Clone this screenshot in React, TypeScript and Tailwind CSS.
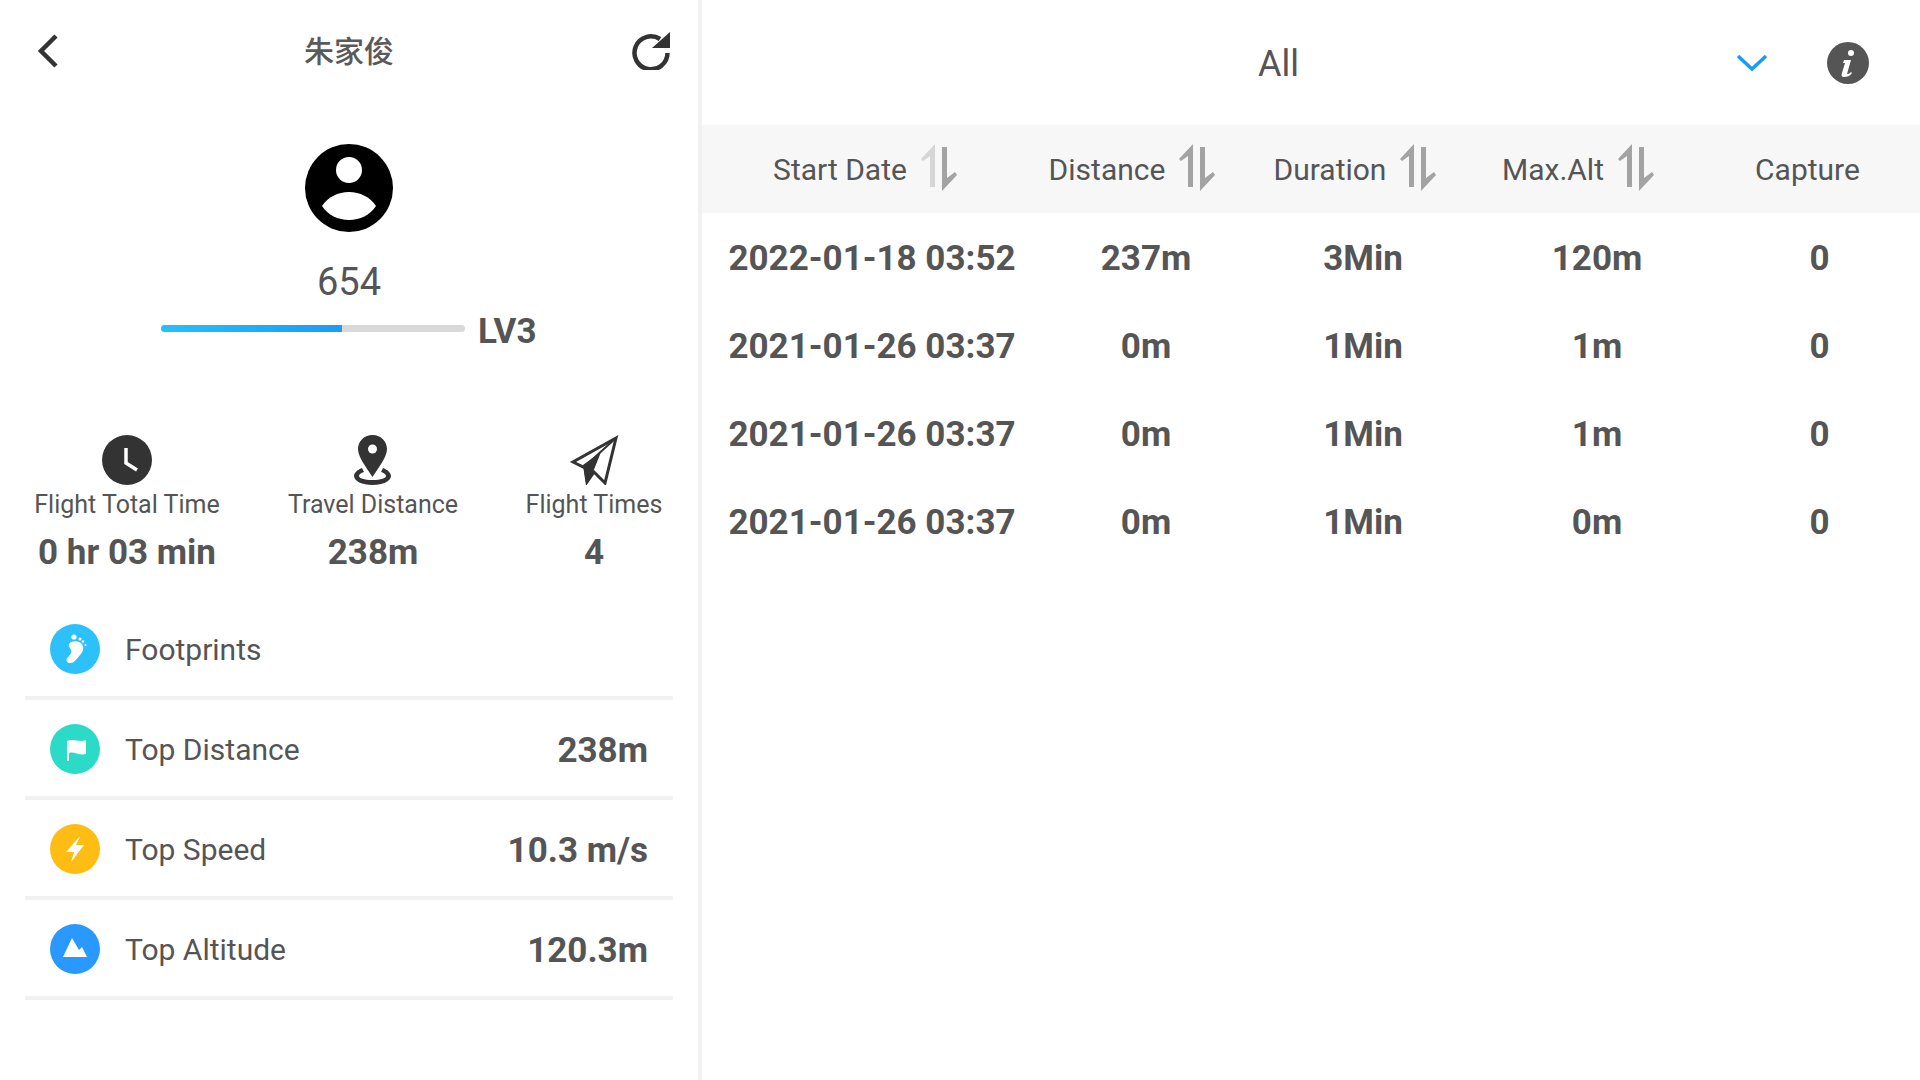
import React from "react";

const font = { fontFamily: 'Roboto, "Noto Sans CJK SC", sans-serif' };

const stats = [
  { label: "Flight Total Time", value: "0 hr 03 min", icon: "clock", width: "w-[254px]" },
  { label: "Travel Distance", value: "238m", icon: "pin", width: "w-[238px]" },
  { label: "Flight Times", value: "4", icon: "plane", width: "w-[204px]" },
];

const records = [
  { label: "Footprints", value: "", icon: "foot" },
  { label: "Top Distance", value: "238m", icon: "flag" },
  { label: "Top Speed", value: "10.3 m/s", icon: "bolt" },
  { label: "Top Altitude", value: "120.3m", icon: "peak" },
];

const flights = [
  { date: "2022-01-18 03:52", distance: "237m", duration: "3Min", alt: "120m", capture: "0" },
  { date: "2021-01-26 03:37", distance: "0m", duration: "1Min", alt: "1m", capture: "0" },
  { date: "2021-01-26 03:37", distance: "0m", duration: "1Min", alt: "1m", capture: "0" },
  { date: "2021-01-26 03:37", distance: "0m", duration: "1Min", alt: "0m", capture: "0" },
];

const StatIcon = ({ name }: { name: string }) => {
  if (name === "clock") {
    return (
      <svg width="50" height="50" viewBox="0 0 50 50">
        <circle cx="25" cy="25" r="25" fill="#333" />
        <path d="M24 13v15l11 7" fill="none" stroke="#fff" strokeWidth="3.5" />
      </svg>
    );
  }
  if (name === "pin") {
    return (
      <svg width="40" height="50" viewBox="0 0 40 50">
        <path d="M19.500 0C10.500 0 5 7 5 14c0 8 8 18 14.500 28C26 32 34 22 34 14 34 7 28.500 0 19.500 0z" fill="#333" />
        <circle cx="19.500" cy="14" r="4.500" fill="#fff" />
        <path d="M9 33c-5 2-8 5-8 8 0 5 8 9 18.500 9S38 46 38 41c0-3-3-6-8-8l-2 4c3 1 5 2 5 4 0 2-5 4-13.500 4S6 43 6 41c0-2 2-3 5-4z" fill="#333" />
      </svg>
    );
  }
  return (
    <svg width="50" height="50" viewBox="0 0 50 50">
      <path d="M47 3 4 27l12 6 2 14 7-10 11 11z" fill="none" stroke="#333" strokeWidth="3" />
      <path d="M47 3 15 32" fill="none" stroke="#333" strokeWidth="2" />
      <path d="M32 17 14 30l3 18 7-11z" fill="#333" />
    </svg>
  );
};

const RecordIcon = ({ name }: { name: string }) => {
  if (name === "foot") {
    return (
      <svg width="50" height="50" viewBox="0 0 50 50">
        <circle cx="25" cy="25" r="25" fill="#2cc1fb" />
        <path d="M19 20c1-3 8-4 12-1 4 4 2 9-1 12-3 3-4 7-9 8-4 1-6-3-3-6 3-3 4-5 3-7-1-2-3-4-2-6z" fill="#fff" />
        <circle cx="24" cy="13" r="2.600" fill="#fff" />
        <circle cx="30" cy="15" r="1.500" fill="#fff" />
        <circle cx="33" cy="17.500" r="1.300" fill="#fff" />
        <circle cx="35.500" cy="21" r="1" fill="#fff" />
      </svg>
    );
  }
  if (name === "flag") {
    return (
      <svg width="50" height="50" viewBox="0 0 50 50">
        <circle cx="25" cy="25" r="25" fill="#2bdbc8" />
        <path d="M17 37V17c6-3 12 2 19-1v14c-7 2-12-3-17-1v8z" fill="#fff" />
      </svg>
    );
  }
  if (name === "bolt") {
    return (
      <svg width="50" height="50" viewBox="0 0 50 50">
        <circle cx="25" cy="25" r="25" fill="#ffbd14" />
        <path d="M30 12 16 28h8l-3 10 13-17h-8z" fill="#fff" />
      </svg>
    );
  }
  return (
    <svg width="50" height="50" viewBox="0 0 50 50">
      <circle cx="25" cy="25" r="25" fill="#2a99ff" />
      <path d="M13 33 22 14l7 12 3-3 5 10z" fill="#fff" />
    </svg>
  );
};

const SortIcon = ({ active }: { active?: boolean }) => (
  <svg width="36" height="47" viewBox="0 0 36 47" className="mb-[3px] shrink-0">
    <path d="M14 0V43H9V12L2 17 0 15z" fill={active ? "#d6d6d6" : "#a3a3a3"} />
    <path d="M21 3h5V34l8-6 2 3L21 47z" fill="#a3a3a3" />
  </svg>
);

const Header = ({ label, active }: { label: string; active?: boolean }) => (
  <div className="flex items-center justify-center gap-[14px]">
    <span>{label}</span>
    <SortIcon active={active} />
  </div>
);

export default function App() {
  return (
    <div style={font} className="flex h-[1080px] w-[1920px] overflow-hidden bg-white text-[#555]">
      <div className="flex h-full w-[702px] shrink-0 flex-col border-r-[4px] border-[#f1f1f1]">
        <div className="grid h-[101px] grid-cols-[1fr_auto_1fr] items-center px-[28px]">
          <svg width="22" height="36" viewBox="0 0 22 36" className="ml-[9px]">
            <path d="M19 3 4 18l15 15" fill="none" stroke="#333" strokeWidth="4.500" />
          </svg>
          <span className="pt-[2px] text-[30px] font-medium text-[#5a5a5a]">朱家俊</span>
          <svg width="38" height="38" viewBox="0 0 38 38" className="justify-self-end">
            <path d="M35.500 21A16.500 16.500 0 1 1 28 7" fill="none" stroke="#333" strokeWidth="4.500" />
            <path d="M38 0V16H20z" fill="#333" />
          </svg>
        </div>
        <div className="mt-[43px] flex justify-center">
          <svg width="88" height="88" viewBox="0 0 88 88">
            <circle cx="44" cy="44" r="44" fill="#000" />
            <ellipse cx="44" cy="26" rx="13" ry="13" fill="#fff" />
            <path d="M17 62c6-9 16-14 27-14s21 5 27 14c-6 9-16 14-27 14s-21-5-27-14z" fill="#fff" />
          </svg>
        </div>
        <div className="mt-[28px] text-center text-[38px] leading-[45px]">654</div>
        <div className="mt-[6px] flex h-[40px] items-center pl-[161px]">
          <div className="mb-[5px] h-[7px] w-[304px] overflow-hidden rounded-full bg-[#d9d9d9]">
            <div className="h-full w-[181px] bg-gradient-to-r from-[#26c0fb] to-[#1a9cf4]" />
          </div>
          <span className="ml-[13px] pt-[2px] text-[35px] font-bold">LV3</span>
        </div>
        <div className="mt-[83px] flex">
          {stats.map((stat) => (
            <div key={stat.label} className={`flex flex-col items-center ${stat.width}`}>
              <div className="flex h-[52px] items-center">
                <StatIcon name={stat.icon} />
              </div>
              <span className="mt-[4px] text-[25px] leading-[30px]">{stat.label}</span>
              <span className="mt-[13px] text-[35px] font-bold leading-[40px]">{stat.value}</span>
            </div>
          ))}
        </div>
        <div className="mx-[25px] mt-[27px] flex flex-col">
          {records.map((record) => (
            <div key={record.label} className="flex h-[100px] items-center border-b-[4px] border-[#f1f1f1] px-[25px] pt-[2px]">
              <RecordIcon name={record.icon} />
              <span className="ml-[25px] text-[30px]">{record.label}</span>
              <span className="ml-auto pt-[4px] text-[35px] font-bold">{record.value}</span>
            </div>
          ))}
        </div>
      </div>
      <div className="flex min-w-0 flex-1 flex-col">
        <div className="flex h-[125px] items-center">
          <span className="ml-[556px] pt-[2px] text-[36px]">All</span>
          <svg width="32" height="18" viewBox="0 0 32 18" className="ml-auto mr-[59px]">
            <path d="M2 2l14 13L30 2" fill="none" stroke="#1a9cf4" strokeWidth="3.500" />
          </svg>
          <svg width="42" height="42" viewBox="0 0 42 42" className="mr-[51px]">
            <circle cx="21" cy="21" r="21" fill="#555" />
            <circle cx="24" cy="11" r="3" fill="#fff" />
            <path d="M17 18h7l-4 14c2 0 3-1 4-2l1 1c-2 3-5 4-8 4-2 0-3-1-2-4l3-10h-2z" fill="#fff" />
          </svg>
        </div>
        <div className="grid h-[88px] grid-cols-[326px_208px_238px_208px_234px] items-center bg-[#f7f7f7] text-[30px]">
          <Header label="Start Date" active />
          <Header label="Distance" />
          <Header label="Duration" />
          <Header label="Max.Alt" />
          <div className="pl-[17px] text-center">Capture</div>
        </div>
        {flights.map((flight, i) => (
          <div key={i} className="grid h-[88px] grid-cols-[340px_208px_226px_242px_198px] items-center pt-[5px] text-center text-[35px] font-bold">
            <div>{flight.date}</div>
            <div>{flight.distance}</div>
            <div>{flight.duration}</div>
            <div>{flight.alt}</div>
            <div className="pl-[5px]">{flight.capture}</div>
          </div>
        ))}
      </div>
    </div>
  );
}
